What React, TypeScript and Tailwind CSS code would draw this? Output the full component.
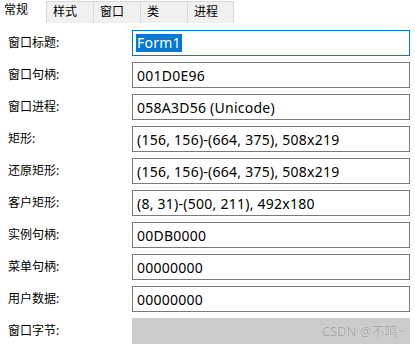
import React from "react";

const rows: { label: string; value: string; kind?: "focus" | "disabled" }[] = [
  { label: "窗口标题:", value: "Form1", kind: "focus" },
  { label: "窗口句柄:", value: "001D0E96" },
  { label: "窗口进程:", value: "058A3D56 (Unicode)" },
  { label: "矩形:", value: "(156, 156)-(664, 375), 508x219" },
  { label: "还原矩形:", value: "(156, 156)-(664, 375), 508x219" },
  { label: "客户矩形:", value: "(8, 31)-(500, 211), 492x180" },
  { label: "实例句柄:", value: "00DB0000" },
  { label: "菜单句柄:", value: "00000000" },
  { label: "用户数据:", value: "00000000" },
  { label: "窗口字节:", value: "", kind: "disabled" },
];

const tabs = ["样式", "窗口", "类", "进程"];

export default function App() {
  return (
    <div
      className="w-[415px] h-[344px] bg-white overflow-hidden text-black"
      style={{ fontFamily: '"Noto Sans", "Noto Sans CJK SC", sans-serif' }}
    >
      <div className="flex h-[23px]">
        <div className="w-[46px] h-[23px] pl-[4px] pt-[2px] text-[12px] leading-[16px]">常规</div>
        <div className="flex mt-[1px] border-b border-[#d9d9d9]">
          {tabs.map((t) => (
            <div
              key={t}
              className="w-[47px] h-[22px] bg-[#f0f0f0] border-t border-l border-[#d9d9d9] last:border-r pl-[6px] pt-[2px] text-[12px] leading-[16px]"
            >
              {t}
            </div>
          ))}
        </div>
      </div>
      <div className="flex flex-col gap-[6px] pt-[7px]">
        {rows.map((r) => (
          <div key={r.label} className="flex items-center h-[26px]">
            <div className="w-[132px] pl-[8px] text-[12px]">{r.label}</div>
            {r.kind === "disabled" ? (
              <div className="relative w-[278px] h-[26px] bg-[#cccccc]">
                <span className="absolute right-[5px] top-[4px] text-[13px] text-[#a3a3a3] [text-shadow:0_0_1px_#ffffff]">
                  CSDN @不鸣~
                </span>
              </div>
            ) : r.kind === "focus" ? (
              <div className="w-[278px] h-[26px] border border-[#0078d7] flex items-center pl-[3px]">
                <span className="bg-[#0078d7] text-white text-[14px] tracking-[0.25px] leading-[18px] px-[1px]">{r.value}</span>
              </div>
            ) : (
              <div className="w-[278px] h-[26px] border border-[#7a7a7a] flex items-center pl-[4px] text-[14px] tracking-[0.25px] whitespace-nowrap">
                {r.value}
              </div>
            )}
          </div>
        ))}
      </div>
    </div>
  );
}
